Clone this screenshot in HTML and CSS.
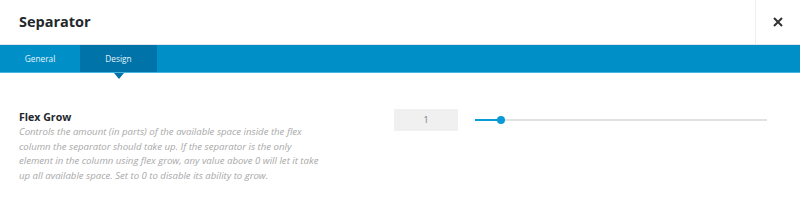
FILE: index.html
```html
<!DOCTYPE html>
<html lang="en">
<head>
  <meta charset="UTF-8" />
  <title>Separator</title>
  <link rel="stylesheet" href="styles.css">
</head>
<body>

  <div class="modal">
    <div class="modal-header">
      <h2 class="modal-title">Separator</h2>
      <button class="modal-close" aria-label="Close">
        <svg width="10" height="10" viewBox="0 0 10 10"><path d="M1 1 L9 9 M9 1 L1 9" stroke="#333" stroke-width="2" /></svg>
      </button>
    </div>

    <!-- Tabs -->
    <div class="tabs">
      <a class="tab">General</a>
      <a class="tab active">Design</a>
    </div>

    <div class="options">
      <div class="option">
        <div class="option-text">
          <h3>Flex Grow</h3>
          <p>Controls the amount (in parts) of the available space inside the flex column the separator should take up. If the separator is the only element in the column using flex grow, any value above 0 will let it take up all available space. Set to 0 to disable its ability to grow.</p>
        </div>
        <div class="option-field">
          <div class="number">1</div>
          <div class="range">
            <div class="range-fill" style="width: 26px"></div>
            <div class="range-thumb"></div>
          </div>
        </div>
      </div>
    </div>
  </div>

</body>
</html>
```

FILE: styles.css
```css
html, body {
  margin: 0;
  padding: 0;
  background: #fff;
  font-family: 'Open Sans', 'Noto Sans', sans-serif;
  color: #23282d;
}

.modal-header {
  display: flex;
  align-items: stretch;
  height: 44px;
  border-bottom: 1px solid #e2e4e7;
}

.modal-title {
  flex: 1;
  margin: 0;
  padding-left: 19px;
  font-size: 14.5px;
  font-weight: 700;
  line-height: 44px;
}

.modal-close {
  width: 45px;
  border: 0;
  border-left: 1px solid #eeeeee;
  background: #fff;
  padding: 0;
  display: flex;
  align-items: center;
  justify-content: center;
}

.tabs {
  display: flex;
  height: 27px;
  background: #008fc7;
  border-bottom: 1px solid #44b4e0;
}

.tab {
  position: relative;
  display: flex;
  align-items: center;
  justify-content: center;
  width: 80px;
  font-size: 8.3px;
  color: #e6f4fa;
}

.tab.active {
  width: 77px;
  background: #0073a8;
}

.tab.active::after {
  content: "";
  position: absolute;
  left: 50%;
  top: 28px;
  margin-left: -5px;
  border-left: 5px solid transparent;
  border-right: 5px solid transparent;
  border-top: 6px solid #0073a8;
}

.options {
  padding: 37px 33px 0 19px;
}

.option {
  display: grid;
  grid-template-columns: 375px 1fr;
}

.option-text h3 {
  margin: 0;
  font-size: 10.6px;
  font-weight: 700;
  line-height: 15px;
}

.option-text p {
  margin: 0;
  width: 303px;
  font-size: 9.6px;
  font-style: italic;
  line-height: 14.7px;
  color: #a8a8a8;
}

.option-field {
  display: flex;
  align-items: center;
  height: 22px;
  margin-top: -1px;
}

.number {
  width: 64px;
  height: 22px;
  line-height: 22px;
  background: #f0f0f0;
  text-align: center;
  font-size: 9px;
  color: #777;
}

.range {
  position: relative;
  flex: 1;
  height: 2px;
  margin-left: 17px;
  background: #e2e2e2;
}

.range-fill {
  height: 2px;
  background: #0a9ad6;
}

.range-thumb {
  position: absolute;
  left: 22px;
  top: -3px;
  width: 8px;
  height: 8px;
  border-radius: 50%;
  background: #0a9ad6;
}
```
